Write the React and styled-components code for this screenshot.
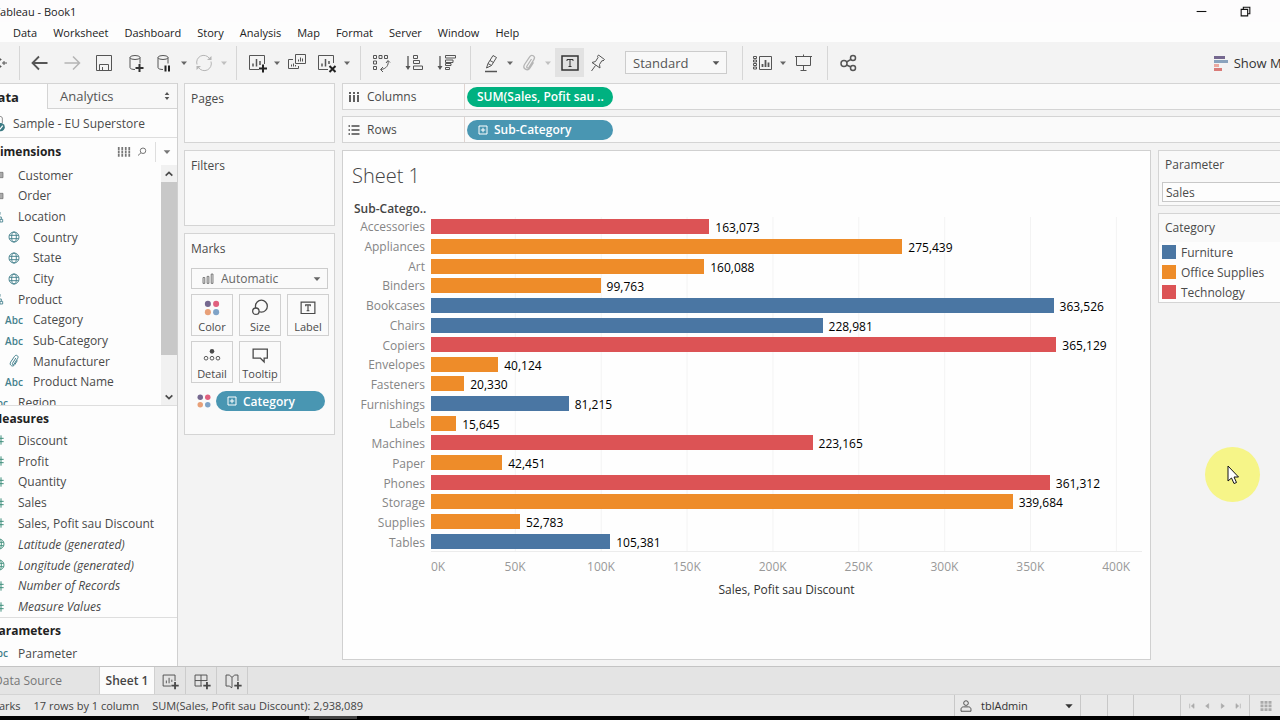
import React, { useState } from 'react'
import styled, { createGlobalStyle } from 'styled-components'

const MENU = ['Data', 'Worksheet', 'Dashboard', 'Story', 'Analysis', 'Map', 'Format', 'Server', 'Window', 'Help']

const DIMENSIONS = [
  { name: 'Customer', icon: 'folder' },
  { name: 'Order', icon: 'folder' },
  { name: 'Location', icon: 'hierarchy' },
  { name: 'Country', icon: 'globe', nested: true },
  { name: 'State', icon: 'globe', nested: true },
  { name: 'City', icon: 'globe', nested: true },
  { name: 'Product', icon: 'hierarchy' },
  { name: 'Category', icon: 'abc', nested: true },
  { name: 'Sub-Category', icon: 'abc', nested: true },
  { name: 'Manufacturer', icon: 'clip', nested: true },
  { name: 'Product Name', icon: 'abc', nested: true },
  { name: 'Region', icon: 'abc' },
]

const MEASURES = [
  { name: 'Discount', icon: 'number' },
  { name: 'Profit', icon: 'number' },
  { name: 'Quantity', icon: 'number' },
  { name: 'Sales', icon: 'number' },
  { name: 'Sales, Pofit sau Discount', icon: 'number' },
  { name: 'Latitude (generated)', icon: 'globe', generated: true },
  { name: 'Longitude (generated)', icon: 'globe', generated: true },
  { name: 'Number of Records', icon: 'number', generated: true },
  { name: 'Measure Values', icon: 'number', generated: true },
]

const COLORS = {
  Furniture: '#4a76a3',
  'Office Supplies': '#ee8c29',
  Technology: '#dc5355',
}

const F = 'Furniture'
const O = 'Office Supplies'
const T = 'Technology'

const SALES = [
  ['Accessories', 163073, T],
  ['Appliances', 275439, O],
  ['Art', 160088, O],
  ['Binders', 99763, O],
  ['Bookcases', 363526, F],
  ['Chairs', 228981, F],
  ['Copiers', 365129, T],
  ['Envelopes', 40124, O],
  ['Fasteners', 20330, O],
  ['Furnishings', 81215, F],
  ['Labels', 15645, O],
  ['Machines', 223165, T],
  ['Paper', 42451, O],
  ['Phones', 361312, T],
  ['Storage', 339684, O],
  ['Supplies', 52783, O],
  ['Tables', 105381, F],
]

// the plot is cut a little to the right of zero
const AXIS_MIN = 1000
const AXIS_MAX = 415000
const AXIS_SPAN = AXIS_MAX - AXIS_MIN
const TICKS = [50, 100, 150, 200, 250, 300, 350, 400]

const SHAPES = {
  diamonds: <path d="M5 6v3M3.500 7.500h3M10 10v4M8 12h4M13 7v3M11.500 8.500h3M17 10v4M15 12h5M13 14v3M11.500 15.500h3M5 15v3M3.500 16.500h3" />,
  back: <path d="M19.500 12H5M11 5.500L4.500 12l6.500 6.500" strokeWidth="1.800" />,
  forward: <path d="M4.500 12H19M13 5.500l6.500 6.500-6.500 6.500" strokeWidth="1.500" />,
  save: <path d="M4.500 4.500h15v15h-15zM7.500 19v-5.500h9V19M10.500 19v-3" />,
  dbAdd: (
    <>
      <ellipse cx="11" cy="6.500" rx="5" ry="2" />
      <path d="M6 6.500v10c0 1.200 2 2 5 2M16 6.500v6" />
      <path d="M15.500 13v8M11.500 17h8" stroke="#333" strokeWidth="2" />
    </>
  ),
  dbPause: (
    <>
      <ellipse cx="11" cy="6.500" rx="5" ry="2" />
      <path d="M6 6.500v10c0 1.200 2 2 5 2M16 6.500v6" />
      <path d="M13.500 14.500v6M17 14.500v6" stroke="#222" strokeWidth="2" />
    </>
  ),
  refresh: (
    <>
      <path d="M5 13.500A7 7 0 0 1 17.500 7.500M19 10.500A7 7 0 0 1 6.500 16.500" />
      <path d="M19.500 5v4h-4.500zM4.500 19v-4h4.500z" fill="currentColor" stroke="none" />
    </>
  ),
  newSheet: (
    <>
      <path d="M19.500 13V4.500h-15v14H14" />
      <path d="M8 15.500v-3M11.500 15.500V8M15 14V10" strokeWidth="1.500" />
      <path d="M18 13.500v8M14 17.500h8" stroke="#222" strokeWidth="2" />
    </>
  ),
  duplicate: (
    <>
      <path d="M10.500 3.500h10v9h-10zM8 8.500H3.500v9h10v-2.500" />
      <path d="M13.500 10.500v-2M15.500 10.500v-4M17.500 10.500V7.500M6.500 15.500v-2M8.500 15.500v-3M10.500 15.500v-1.500" />
    </>
  ),
  clear: (
    <>
      <path d="M18.500 12V4.500h-15v14H13" />
      <path d="M7 15.500v-3M10.500 15.500V8M14 13V10" strokeWidth="1.500" />
      <path d="M14.500 15l6 6M20.500 15l-6 6" stroke="#222" strokeWidth="2" />
    </>
  ),
  swap: (
    <>
      <path d="M4.500 4.500h3v3h-3zM10 4.500h3v3h-3zM15.500 4.500h3v3h-3zM4.500 10h3v3h-3zM4.500 15.500h3v3h-3z" />
      <path d="M19 10c1 4-2 8-7 8.500M17 12l2-2.500 2 2M14 16l-2.500 2.500L14 21" />
    </>
  ),
  sortAsc: (
    <>
      <path d="M6 5v12" strokeWidth="1.300" />
      <path d="M3.500 15h5L6 19z" fill="currentColor" stroke="none" />
      <path d="M11.500 4.500h4v3h-4zM11.500 9.500h6v3h-6zM11.500 15h9v3.500h-9z" />
    </>
  ),
  sortDesc: (
    <>
      <path d="M5 5v12" strokeWidth="1.300" />
      <path d="M2.500 15h5L5 19z" fill="currentColor" stroke="none" />
      <path d="M10.500 4.500h10v2.500h-10zM10.500 9h7.500v2.500h-7.500zM10.500 12.500h5.500v2h-5.500zM10.500 16.500h4v2h-4z" />
    </>
  ),
  highlight: (
    <>
      <path d="M9 12.500L14 4.500l3.500 2-5 8zM9 12.500l-1.500 4.500 5-2.500M11 9.500l3.500 2" />
      <path d="M6 20.500h12" strokeWidth="1.500" />
    </>
  ),
  clip: <path d="M14.500 8l-4.500 7c-1 1.500 1 2.800 2 1.300l5-8c1.800-3-2.400-5.500-4.200-2.600L7.500 13.500c-2.400 4 3 7.300 5.500 3.400l3.500-5.500" strokeWidth="1.300" />,
  text: (
    <>
      <path d="M4 5h16v14H4z" strokeWidth="1.500" stroke="#333" />
      <path d="M9 10V8.500h6V10M12 8.500v7M10.500 15.500h3" stroke="#333" />
    </>
  ),
  pin: <path d="M13.500 4l6 4.500-1.500 1.500-1-.5-2.500 4 .5 3.500-8-5.500 3.500-1 2.500-4-.500-1zM10.500 14.500L6.500 20" />,
  cards: (
    <>
      <path d="M8.500 5.500h12v13h-12zM2.500 5.500h3v2h-3zM2.500 9h3v2h-3zM2.500 12.500h3v2h-3zM2.500 16h3v2h-3z" />
      <path d="M11.500 16v-3M14.500 16V9M17.500 16v-4.500" strokeWidth="1.800" />
    </>
  ),
  present: <path d="M4 5.500h17M5.500 5.500v9h14v-9M12.500 14.500v5M9.500 19.500h6M12.500 3.500v2" />,
  share: (
    <g strokeWidth="1.500">
      <circle cx="8" cy="12.500" r="3" />
      <circle cx="17" cy="7" r="2.500" />
      <circle cx="17" cy="17" r="2.500" />
      <path d="M10.500 11l4.500-2.700M10.500 14l4.500 2" />
    </g>
  ),
  showMe: (
    <g stroke="none">
      <path d="M4 5h11v3H4z" fill="#75688f" />
      <path d="M4 9h14v3H4z" fill="#8aa3bd" />
      <path d="M4 13h5v3H4z" fill="#eaa9a0" />
      <path d="M4 17h8v3H4z" fill="#d97b78" />
    </g>
  ),
  caret: <path d="M8 10h8l-4 4.500z" fill="currentColor" stroke="none" />,
  folder: <path d="M5 8h13v8H5z" fill="#aaa" stroke="#666" />,
  hierarchy: (
    <g strokeWidth="1.300">
      <path d="M9.500 4.500h4v4h-4zM13.500 15.500h4v4h-4zM5.500 15.500h4v4h-4zM11.500 8.500V12M7.500 15.500V12h8v3.500" />
    </g>
  ),
  globe: (
    <g strokeWidth="1.400">
      <circle cx="12" cy="12" r="7.500" />
      <ellipse cx="12" cy="12" rx="3.500" ry="7.500" />
      <path d="M5 9.500h14M5 14.500h14" />
    </g>
  ),
  number: <path d="M10 5v14M15 5v14M6 9.500h13M6 14.500h13" strokeWidth="1.500" />,
  database: (
    <>
      <path d="M5 6c0-3 11-3 11 0v6M5 6v10" stroke="#777" />
      <circle cx="14" cy="17" r="5" fill="currentColor" stroke="none" />
      <path d="M11.500 17l2 2 3-4" stroke="#fff" strokeWidth="1.500" />
    </>
  ),
  updown: <path d="M12 6l3.500 4.500h-7zM12 18l3.500-4.500h-7z" fill="currentColor" stroke="none" />,
  gridView: <path d="M3 3.500v17M9 3.500v17M15 3.500v17M21 3.500v17" strokeWidth="3" strokeDasharray="5 .8" />,
  search: (
    <g strokeWidth="2">
      <circle cx="14" cy="9.500" r="5.500" />
      <path d="M10 13.500L4 19" />
    </g>
  ),
  bars: <path d="M3.500 9.500h3v10h-3zM10.500 7.500h3v12h-3zM17.500 3.500h3v16h-3z" strokeWidth="1.500" />,
  dots: (
    <g stroke="none">
      <circle cx="7.500" cy="7.500" r="3.300" fill="#75688f" />
      <circle cx="16.500" cy="7.500" r="3.300" fill="#e0607e" />
      <circle cx="7.500" cy="16.500" r="3.300" fill="#e8a078" />
      <circle cx="16.500" cy="16.500" r="3.300" fill="#7fa3c7" />
    </g>
  ),
  size: (
    <g strokeWidth="1.400">
      <circle cx="13.500" cy="10" r="6.500" />
      <circle cx="7.500" cy="15.500" r="3.500" fill="#fafafa" />
    </g>
  ),
  label: <path d="M4.500 5.500h15v12.500h-15zM9.500 10V8.500h5V10M12 8.500v6.500M10.500 15h3" strokeWidth="1.300" />,
  detail: (
    <>
      <circle cx="12" cy="8" r="2.500" fill="currentColor" stroke="none" />
      <circle cx="5.500" cy="15.500" r="2" />
      <circle cx="12" cy="15.500" r="2" />
      <circle cx="18.500" cy="15.500" r="2" />
    </>
  ),
  tooltip: <path d="M4.500 5.500h15.500v10h-3.500v4l-4-4h-8z" strokeWidth="1.400" />,
  plusBox: <path d="M4 4h16v16H4zM12 7.500v9M7.500 12h9" strokeWidth="2" />,
  columns: <path d="M4 2v4M4 8v14M12 2v4M12 8v14M20 2v4M20 8v14" strokeWidth="3.500" />,
  rows: <path d="M1 4h3M7 4h16M1 12h3M7 12h16M1 20h3M7 20h16" strokeWidth="3" />,
  addSheet: (
    <>
      <path d="M17.500 12V5.500h-13v12H13M8 14.500v-3M11 14.500v-6M14 13V10.500" />
      <path d="M17.500 13v8M13.500 17h8" strokeWidth="2" />
    </>
  ),
  addDashboard: (
    <>
      <path d="M18.500 12V5.500h-13v12H13M12 5.500v12M5.500 11.500h13" />
      <path d="M18.500 13v8M14.500 17h8" strokeWidth="2" />
    </>
  ),
  addStory: (
    <>
      <path d="M18.500 12V5.500H15L12 8 9 5.500H5.500v12H9l3 2M12 8v11" />
      <path d="M18.500 13v8M14.500 17h8" strokeWidth="2" />
    </>
  ),
  user: (
    <g strokeWidth="1.400">
      <circle cx="12" cy="7" r="4" />
      <path d="M3.500 21v-3.500c0-2.500 2-4 4-4h9c2 0 4 1.500 4 4V21z" />
    </g>
  ),
  first: <path d="M5 5v14M18 5v14l-8-7z" fill="currentColor" strokeWidth="2" />,
  prev: <path d="M17 5v14l-9-7z" fill="currentColor" strokeWidth="2" />,
  next: <path d="M7 5v14l9-7z" fill="currentColor" strokeWidth="2" />,
  last: <path d="M19 5v14M6 5v14l8-7z" fill="currentColor" strokeWidth="2" />,
  tiles: <path d="M4 2v20M12 2v20M20 2v20" strokeWidth="6" strokeDasharray="5.500 1.700" />,
  chevronUp: <path d="M4 16l8-8 8 8" strokeWidth="4" />,
  chevronDown: <path d="M4 8l8 8 8-8" strokeWidth="4" />,
  minimize: <path d="M3 12h18" strokeWidth="2" />,
  restore: <path d="M4 8h12v12H4zM8 8V4h12v12h-4" strokeWidth="2" />,
}

const Icon = ({ name, size = 24 }) => (
  <Svg viewBox="0 0 24 24" width={size} height={size} aria-hidden="true">
    {SHAPES[name]}
  </Svg>
)

const ToolButton = ({ icon, label, ...rest }) => (
  <Tool type="button" aria-label={label} {...rest}>
    <Icon name={icon} />
  </Tool>
)

const Caret = ({ label, faded }) => (
  <CaretButton type="button" aria-label={label} $faded={faded}>
    <Icon name="caret" size={18} />
  </CaretButton>
)

const Field = ({ name, icon, nested, generated }) => (
  <FieldRow $nested={nested}>
    <FieldIcon $measure={icon === 'number' || generated}>
      {icon === 'abc' ? 'Abc' : <Icon name={icon} size={icon === 'clip' ? 18 : 16} />}
    </FieldIcon>
    <FieldName $generated={generated}>{name}</FieldName>
  </FieldRow>
)

const Toolbar = () => (
  <ToolbarRow>
    <ToolGroup>
      <ToolButton icon="diamonds" label="Start page" />
    </ToolGroup>
    <Divider $before={8} />
    <ToolGroup $gap={8}>
      <ToolButton icon="back" label="Undo" />
      <ToolButton icon="forward" label="Redo" $faded />
      <ToolButton icon="save" label="Save" />
      <ToolButton icon="dbAdd" label="New data source" />
    </ToolGroup>
    <ToolGroup $gap={2} $before={4}>
      <ToolButton icon="dbPause" label="Pause updates" />
      <Caret label="Pause options" />
      <ToolButton icon="refresh" label="Run update" $faded />
      <Caret label="Update options" faded />
    </ToolGroup>
    <Divider $before={6} />
    <ToolGroup $gap={2}>
      <ToolButton icon="newSheet" label="New worksheet" />
      <Caret label="New options" />
      <ToolButton icon="duplicate" label="Duplicate" />
    </ToolGroup>
    <ToolGroup $gap={2} $before={6}>
      <ToolButton icon="clear" label="Clear sheet" />
      <Caret label="Clear options" />
    </ToolGroup>
    <Divider $before={7} />
    <ToolGroup $gap={9}>
      <ToolButton icon="swap" label="Swap rows and columns" />
      <ToolButton icon="sortAsc" label="Sort ascending" />
      <ToolButton icon="sortDesc" label="Sort descending" />
    </ToolGroup>
    <Divider $before={11} />
    <ToolGroup $gap={1}>
      <ToolButton icon="highlight" label="Highlight" />
      <Caret label="Highlight options" />
      <ToolButton icon="clip" label="Group members" $faded />
      <Caret label="Group options" faded />
      <ToolButton icon="text" label="Show mark labels" $active />
      <ToolButton icon="pin" label="Fix axes" />
    </ToolGroup>
    <SelectBox>
      <select aria-label="Fit" defaultValue="Standard">
        <option>Standard</option>
      </select>
      <Icon name="caret" size={20} />
    </SelectBox>
    <Divider $before={15} />
    <ToolGroup $gap={2}>
      <ToolButton icon="cards" label="Show cards" />
      <Caret label="Card options" />
      <ToolButton icon="present" label="Presentation mode" />
    </ToolGroup>
    <Divider $before={12} />
    <ToolGroup>
      <ToolButton icon="share" label="Share" />
    </ToolGroup>
    <ShowMe type="button">
      <Icon name="showMe" />
      Show Me
    </ShowMe>
  </ToolbarRow>
)

const DataPane = () => (
  <Pane>
    <PaneTabs>
      <PaneTab type="button" $active>Data</PaneTab>
      <PaneTab type="button">
        Analytics
        <Icon name="updown" size={16} />
      </PaneTab>
    </PaneTabs>
    <DataSource>
      <Icon name="database" size={20} />
      Sample - EU Superstore
    </DataSource>
    <PaneHeading $height={27}>
      <h2>Dimensions</h2>
      <HeadingTools>
        <button type="button" aria-label="View data"><Icon name="gridView" size={14} /></button>
        <button type="button" aria-label="Find field"><Icon name="search" size={12} /></button>
        <button type="button" aria-label="Menu"><Icon name="caret" size={20} /></button>
      </HeadingTools>
    </PaneHeading>
    <DimensionArea>
      <FieldList $height={248}>
        {DIMENSIONS.map((field) => <Field key={field.name} {...field} />)}
      </FieldList>
      <Scrollbar>
        <button type="button" aria-label="Scroll up"><Icon name="chevronUp" size={10} /></button>
        <Thumb />
        <button type="button" aria-label="Scroll down"><Icon name="chevronDown" size={10} /></button>
      </Scrollbar>
    </DimensionArea>
    <PaneHeading $height={24}>
      <h2>Measures</h2>
    </PaneHeading>
    <FieldList $height={187}>
      {MEASURES.map((field) => <Field key={field.name} {...field} />)}
    </FieldList>
    <PaneHeading $height={25} $ruled>
      <h2>Parameters</h2>
    </PaneHeading>
    <FieldList $height={22}>
      <Field name="Parameter" icon="abc" />
    </FieldList>
  </Pane>
)

const MARKS = [
  ['Color', 'dots'],
  ['Size', 'size'],
  ['Label', 'label'],
  ['Detail', 'detail'],
  ['Tooltip', 'tooltip'],
]

const Cards = () => (
  <CardColumn>
    <Card $height={60}>
      <h3>Pages</h3>
    </Card>
    <Card $height={76}>
      <h3>Filters</h3>
    </Card>
    <Card $height={202}>
      <h3>Marks</h3>
      <MarkType>
        <Icon name="bars" size={14} />
        <select aria-label="Mark type" defaultValue="Automatic">
          <option>Automatic</option>
        </select>
        <Icon name="caret" size={20} />
      </MarkType>
      <MarkGrid>
        {MARKS.map(([label, icon]) => (
          <MarkButton type="button" key={label}>
            <Icon name={icon} size={22} />
            {label}
          </MarkButton>
        ))}
      </MarkGrid>
      <MarkShelf>
        <Icon name="dots" size={20} />
        <Pill type="button" $width={109}>
          <Icon name="plusBox" size={12} />
          Category
        </Pill>
      </MarkShelf>
    </Card>
  </CardColumn>
)

const Chart = () => (
  <Figure>
    <FieldHeader>Sub-Catego..</FieldHeader>
    <ChartBody>
      <RowLabels>
        {SALES.map(([name]) => <li key={name}>{name}</li>)}
      </RowLabels>
      <Plot>
        {SALES.map(([name, value, category]) => (
          <li key={name}>
            <Bar
              $color={COLORS[category]}
              style={{ width: `${((value - AXIS_MIN) / AXIS_SPAN) * 100}%` }}
            />
            <Value>{value.toLocaleString('en-US')}</Value>
          </li>
        ))}
      </Plot>
    </ChartBody>
    <Axis>
      <span>0K</span>
      {TICKS.map((tick) => <span key={tick}>{tick}K</span>)}
    </Axis>
    <AxisTitle>Sales, Pofit sau Discount</AxisTitle>
  </Figure>
)

const App = () => {
  const [parameter, setParameter] = useState('Sales')

  return (
    <Screen>
      <GlobalStyle />
      <Window>
        <TitleBar>
          <h1>Tableau - Book1</h1>
          <WindowControls>
            <button type="button" aria-label="Minimize"><Icon name="minimize" size={13} /></button>
            <button type="button" aria-label="Restore"><Icon name="restore" size={13} /></button>
          </WindowControls>
        </TitleBar>
        <MenuBar>
          {MENU.map((item) => <button type="button" key={item}>{item}</button>)}
        </MenuBar>
        <Toolbar />
        <Workspace>
          <DataPane />
          <Cards />
          <Main>
            <Shelf>
              <ShelfName><Icon name="columns" size={12} />Columns</ShelfName>
              <Pill type="button" $width={146} $measure>SUM(Sales, Pofit sau ..</Pill>
            </Shelf>
            <Shelf>
              <ShelfName><Icon name="rows" size={12} />Rows</ShelfName>
              <Pill type="button" $width={146}>
                <Icon name="plusBox" size={12} />
                Sub-Category
              </Pill>
            </Shelf>
            <Content>
              <Sheet>
                <h2>Sheet 1</h2>
                <Chart />
              </Sheet>
              <SideColumn>
                <SideCard>
                  <SideTitle as="label" htmlFor="parameter">Parameter</SideTitle>
                  <ParameterSelect
                    id="parameter"
                    value={parameter}
                    onChange={(e) => setParameter(e.target.value)}
                  >
                    <option>Sales</option>
                    <option>Profit</option>
                    <option>Discount</option>
                  </ParameterSelect>
                </SideCard>
                <SideCard>
                  <SideTitle>Category</SideTitle>
                  <Legend>
                    {Object.keys(COLORS).map((name) => (
                      <li key={name}><Swatch $color={COLORS[name]} />{name}</li>
                    ))}
                  </Legend>
                </SideCard>
              </SideColumn>
            </Content>
          </Main>
        </Workspace>
        <SheetTabs>
          <SheetTab type="button" $source>Data Source</SheetTab>
          <SheetTab type="button" $active>Sheet 1</SheetTab>
          <AddTab type="button" aria-label="New worksheet"><Icon name="addSheet" size={22} /></AddTab>
          <AddTab type="button" aria-label="New dashboard"><Icon name="addDashboard" size={22} /></AddTab>
          <AddTab type="button" aria-label="New story"><Icon name="addStory" size={22} /></AddTab>
        </SheetTabs>
        <StatusBar>
          <StatusText>
            <span>Marks</span>
            <span>17 rows by 1 column</span>
            <span>SUM(Sales, Pofit sau Discount): 2,938,089</span>
          </StatusText>
          <StatusCell $width={126}>
            <Icon name="user" size={14} />
            <User>tblAdmin</User>
            <Icon name="caret" size={22} />
          </StatusCell>
          <StatusCell $width={27} />
          <StatusCell $width={26} />
          <StatusCell $width={47} />
          <StatusCell $width={69} $muted>
            <Icon name="first" size={8} />
            <Icon name="prev" size={8} />
            <Icon name="next" size={8} />
            <Icon name="last" size={8} />
          </StatusCell>
          <StatusCell $width={55} $muted>
            <Icon name="tiles" size={12} />
            <Icon name="tiles" size={12} />
          </StatusCell>
        </StatusBar>
        <Taskbar><span /></Taskbar>
      </Window>
      <Pointer>
        <svg viewBox="0 0 12 20" width="12" height="20" aria-hidden="true">
          <path d="M1 1v15l3.500-3 2.500 5.500 2.500-1-2.500-5.500H11.500z" fill="#fff" stroke="#111" />
        </svg>
      </Pointer>
    </Screen>
  )
}

const GlobalStyle = createGlobalStyle`
  * {
    box-sizing: border-box;
  }
  body {
    margin: 0;
    background: #f3f3f3;
    color: #4a4a4a;
    font-family: 'Open Sans', 'Liberation Sans', sans-serif;
    font-size: 12px;
  }
  button, select {
    margin: 0;
    padding: 0;
    border: 0;
    background: none;
    color: inherit;
    font: inherit;
  }
  select {
    appearance: none;
  }
  h1, h2, h3, ul, figure {
    margin: 0;
    padding: 0;
    font: inherit;
    list-style: none;
  }
`

const Svg = styled.svg`
  flex: none;
  display: block;
  fill: none;
  stroke: currentColor;
`

const Screen = styled.div`
  position: relative;
  overflow: hidden;
`

/* the window is a little wider than the screen and runs off both sides */
const Window = styled.div`
  display: flex;
  flex-direction: column;
  min-height: 100vh;
  margin: 0 -24px;
`

const TitleBar = styled.header`
  display: flex;
  justify-content: space-between;
  align-items: center;
  height: 22px;
  padding: 0 52px 0 18px;
  background: #fdfcfd;
  color: #222;
  font-size: 11px;
`

const WindowControls = styled.div`
  display: flex;
  gap: 31px;
  color: #111;
`

const MenuBar = styled.nav`
  display: flex;
  gap: 16px;
  height: 20px;
  padding-left: 37px;
  background: #fdfdfd;
  color: #222;
  font-size: 11px;
`

const ToolbarRow = styled.div`
  display: flex;
  align-items: center;
  height: 41px;
  padding-left: 11px;
  background: #f3f3f3;
  color: #555;
`

const ToolGroup = styled.div`
  display: flex;
  align-items: center;
  gap: ${(p) => p.$gap || 0}px;
  margin-left: ${(p) => p.$before || 0}px;
`

const Divider = styled.span`
  width: 1px;
  height: 34px;
  margin: 0 8px 0 ${(p) => p.$before}px;
  background: #d6d6d6;
`

const Tool = styled.button`
  display: flex;
  justify-content: center;
  align-items: center;
  width: ${(p) => (p.$active ? 29 : 24)}px;
  height: 29px;
  background: ${(p) => (p.$active ? '#e2e2e2' : 'none')};
  color: ${(p) => (p.$faded ? '#b5b5b5' : '#555')};
`

const CaretButton = styled.button`
  display: flex;
  justify-content: center;
  width: 12px;
  color: ${(p) => (p.$faded ? '#c0c0c0' : '#666')};
`

const SelectBox = styled.div`
  display: flex;
  align-items: center;
  width: 102px;
  height: 23px;
  margin-left: 16px;
  padding-left: 7px;
  border: 1px solid #ccc;
  background: #f8f8f8;
  select {
    flex: 1;
    font-size: 13px;
  }
`

const ShowMe = styled.button`
  display: flex;
  align-items: center;
  margin-left: auto;
  padding-right: 15px;
  color: #333;
  font-size: 13px;
`

const Workspace = styled.div`
  flex: 1;
  display: flex;
`

const Pane = styled.aside`
  flex: none;
  width: 202px;
  border-right: 1px solid #d0d0d0;
  background: #fdfdfd;
`

const PaneTabs = styled.div`
  display: flex;
  height: 26px;
`

const PaneTab = styled.button`
  display: flex;
  align-items: center;
  justify-content: space-between;
  flex: ${(p) => (p.$active ? 'none' : 1)};
  width: ${(p) => (p.$active ? 71 : 0)}px;
  padding: ${(p) => (p.$active ? '0 0 0 12px' : '0 2px 0 12px')};
  border: solid #d4d4d4;
  border-width: ${(p) => (p.$active ? '1px 0 0' : '1px 0 1px 1px')};
  background: ${(p) => (p.$active ? '#fdfdfd' : '#f8f8f8')};
  color: ${(p) => (p.$active ? '#222' : '#555')};
  font-size: 13px;
  font-weight: ${(p) => (p.$active ? 700 : 400)};
`

const DataSource = styled.div`
  display: flex;
  align-items: center;
  gap: 4px;
  height: 29px;
  padding-left: 13px;
  border-bottom: 1px solid #dedede;
  ${Svg} {
    color: #3b7a83;
  }
`

const PaneHeading = styled.div`
  display: flex;
  align-items: center;
  justify-content: space-between;
  height: ${(p) => p.$height}px;
  padding-left: 15px;
  border-top: ${(p) => (p.$ruled ? '1px solid #dedede' : '0')};
  color: #222;
  font-weight: 700;
`

const HeadingTools = styled.div`
  display: flex;
  align-items: center;
  color: #777;
  button {
    display: flex;
    justify-content: center;
    width: 18px;
  }
  button:last-child {
    width: 22px;
    margin-left: 4px;
    border-left: 1px solid #dedede;
  }
`

const DimensionArea = styled.div`
  display: flex;
  height: 241px;
  overflow: hidden;
  border-bottom: 1px solid #dedede;
`

const FieldList = styled.ul`
  flex: 1;
  display: grid;
  grid-auto-rows: 1fr;
  height: ${(p) => p.$height}px;
`

const FieldRow = styled.li`
  display: flex;
  align-items: center;
  gap: 9px;
  padding-left: ${(p) => (p.$nested ? 28 : 13)}px;
`

const FieldIcon = styled.span`
  display: flex;
  justify-content: center;
  width: 20px;
  color: ${(p) => (p.$measure ? '#3f8f7c' : '#43808c')};
  font-size: 10px;
  font-weight: 600;
`

const FieldName = styled.span`
  font-style: ${(p) => (p.$generated ? 'italic' : 'normal')};
  white-space: nowrap;
`

const Scrollbar = styled.div`
  display: flex;
  flex-direction: column;
  width: 16px;
  background: #f1f1f1;
  button {
    display: flex;
    justify-content: center;
    align-items: center;
    height: 17px;
  }
  button:last-child {
    margin-top: auto;
  }
`

const Thumb = styled.div`
  flex: 0 0 173px;
  background: #c8c8c8;
`

const CardColumn = styled.div`
  flex: none;
  display: flex;
  flex-direction: column;
  gap: 7px;
  width: 151px;
  margin: 0 7px 0 6px;
`

const Card = styled.section`
  height: ${(p) => p.$height}px;
  padding: 0 6px;
  border: 1px solid #d4d4d4;
  background: #fafafa;
  h3 {
    height: 34px;
    line-height: 29px;
  }
`

const MarkType = styled.div`
  display: flex;
  align-items: center;
  gap: 6px;
  height: 21px;
  padding-left: 9px;
  border: 1px solid #ccc;
  color: #666;
  select {
    flex: 1;
  }
`

const MarkGrid = styled.div`
  display: grid;
  grid-template-columns: repeat(3, 42px);
  gap: 5px 6px;
  margin-top: 5px;
`

const MarkButton = styled.button`
  display: flex;
  flex-direction: column;
  align-items: center;
  justify-content: flex-end;
  height: 42px;
  padding-bottom: 1px;
  border: 1px solid #d0d0d0;
  font-size: 11px;
`

const MarkShelf = styled.div`
  display: flex;
  align-items: center;
  gap: 2px;
  margin-top: 8px;
  padding-left: 3px;
`

const Pill = styled.button`
  display: flex;
  align-items: center;
  gap: 5px;
  width: ${(p) => p.$width}px;
  height: 20px;
  padding: 0 10px;
  border-radius: 10px;
  background: ${(p) => (p.$measure ? '#00b180' : '#4996b2')};
  color: #fff;
  font-weight: 600;
  white-space: nowrap;
`

const Main = styled.main`
  flex: 1;
  min-width: 0;
  display: flex;
  flex-direction: column;
  gap: 6px;
`

const Shelf = styled.div`
  display: flex;
  align-items: center;
  gap: 2px;
  height: 27px;
  border: 1px solid #d4d4d4;
  background: #fafafa;
`

const ShelfName = styled.div`
  display: flex;
  align-items: center;
  gap: 7px;
  width: 122px;
  height: 25px;
  padding-left: 5px;
  border-right: 1px solid #e0d4d0;
`

const Content = styled.div`
  flex: 1;
  display: flex;
  gap: 7px;
  padding: 1px 0 6px;
`

const Sheet = styled.section`
  flex: 1;
  padding: 10px 8px 0 9px;
  border: 1px solid #d0d0d0;
  background: #fefefe;
  h2 {
    height: 39px;
    color: #444;
    font-size: 20px;
    font-weight: 300;
    line-height: 30px;
  }
`

const Figure = styled.figure`
  padding-left: 2px;
`

const FieldHeader = styled.div`
  height: 17px;
  color: #444;
  font-weight: 600;
  line-height: 17px;
`

const ChartBody = styled.div`
  display: flex;
  height: 335px;
`

const RowLabels = styled.ul`
  display: grid;
  grid-auto-rows: 1fr;
  align-items: center;
  width: 77px;
  padding-right: 6px;
  color: #858585;
  text-align: right;
`

const Plot = styled.ul`
  flex: 1;
  display: grid;
  grid-auto-rows: 1fr;
  border-bottom: 1px solid #ececec;
  background: linear-gradient(to left, #f3f3f3 1px, transparent 1px) -1px 0 / ${5000000 / AXIS_SPAN}% 100%;
  li {
    display: flex;
    align-items: center;
    gap: 6px;
  }
`

const Bar = styled.span`
  flex: none;
  height: 15px;
  background: ${(p) => p.$color};
`

const Value = styled.span`
  padding-top: 2px;
  color: #000;
  font-weight: 500;
`

const Axis = styled.div`
  display: flex;
  height: 28px;
  margin-left: 77px;
  color: #999;
  line-height: 29px;
  span {
    flex: none;
    width: ${5000000 / AXIS_SPAN}%;
    text-align: center;
  }
  span:first-child {
    width: ${(2500000 - AXIS_MIN * 100) / AXIS_SPAN}%;
    text-align: left;
  }
`

const AxisTitle = styled.figcaption`
  margin-left: 77px;
  color: #333;
  line-height: 20px;
  text-align: center;
`

const SideColumn = styled.aside`
  display: flex;
  flex-direction: column;
  gap: 7px;
  width: 146px;
`

const SideCard = styled.section`
  border: 1px solid #d4d4d4;
  background: #f9f9f9;
`

const SideTitle = styled.h3`
  display: block;
  padding-left: 6px;
  line-height: 28px;
`

const ParameterSelect = styled.select`
  display: block;
  width: 138px;
  height: 20px;
  margin: 3px;
  padding-left: 3px;
  border: 1px solid #c8c8c8;
  background: #fdfdfd;
`

const Legend = styled.ul`
  display: grid;
  grid-auto-rows: 20px;
  padding-left: 3px;
  background: #fdfdfd;
  li {
    display: flex;
    align-items: center;
    gap: 5px;
  }
`

const Swatch = styled.span`
  width: 14px;
  height: 14px;
  background: ${(p) => p.$color};
`

const SheetTabs = styled.nav`
  display: flex;
  height: 29px;
  border-top: 1px solid #c4c4c4;
  border-bottom: 1px solid #d4d4d4;
  background: #e4e4e4;
`

const SheetTab = styled.button`
  width: ${(p) => (p.$source ? 124 : 55)}px;
  padding-left: ${(p) => (p.$source ? 18 : 0)}px;
  border-right: 1px solid #d0d0d0;
  background: ${(p) => (p.$active ? '#fbfbfb' : 'none')};
  color: ${(p) => (p.$active ? '#444' : '#777')};
  font-weight: ${(p) => (p.$active ? 600 : 400)};
  text-align: ${(p) => (p.$source ? 'left' : 'center')};
`

const AddTab = styled.button`
  display: flex;
  justify-content: center;
  align-items: center;
  width: 31px;
  border-right: 1px solid #ccc;
`

const StatusBar = styled.footer`
  display: flex;
  height: 21px;
  background: #e9e9e9;
  color: #444;
  font-size: 11px;
`

const StatusText = styled.div`
  flex: 1;
  display: flex;
  align-items: center;
  gap: 13px;
  padding-left: 13px;
`

const StatusCell = styled.div`
  display: flex;
  align-items: center;
  justify-content: ${(p) => (p.$muted ? 'space-evenly' : 'flex-start')};
  width: ${(p) => p.$width}px;
  padding-left: ${(p) => (p.$muted ? 0 : 4)}px;
  border-left: 1px solid #c8c8c8;
  color: ${(p) => (p.$muted ? '#aaa' : '#333')};
`

const User = styled.span`
  flex: 1;
  padding-left: 8px;
`

const Taskbar = styled.div`
  height: 4px;
  padding-left: 333px;
  background: #000;
  span {
    display: block;
    width: 48px;
    height: 3px;
    background: #444;
  }
`

const Pointer = styled.div`
  position: absolute;
  top: 447px;
  right: 20px;
  display: flex;
  justify-content: center;
  align-items: center;
  width: 55px;
  height: 55px;
  border-radius: 50%;
  background: #f6f588;
  pointer-events: none;
`

export default App
